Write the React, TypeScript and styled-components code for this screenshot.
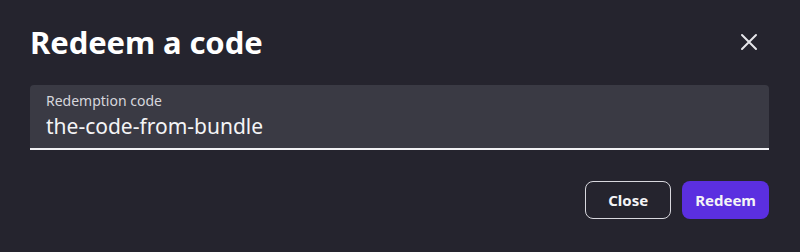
import styled, { createGlobalStyle } from "styled-components";

const GlobalStyle = createGlobalStyle`
  html, body {
    margin: 0;
    padding: 0;
    background: #25242e;
  }
  body {
    font-family: "Noto Sans", "Open Sans", sans-serif;
    color: #ffffff;
  }
`;

const Dialog = styled.div`
  width: 800px;
  height: 252px;
  box-sizing: border-box;
  padding: 22px 31px 0 30px;
  background: #25242e;
  display: flex;
  flex-direction: column;
`;

const Header = styled.div`
  display: flex;
  align-items: center;
  justify-content: space-between;
  height: 40px;
`;

const Title = styled.h2`
  margin: 0;
  font-size: 31px;
  font-weight: 700;
  letter-spacing: -0.1px;
  color: #ffffff;
`;

const IconButton = styled.button`
  width: 32px;
  height: 32px;
  margin-right: 4px;
  border: none;
  background: transparent;
  color: #e6e6ea;
  display: flex;
  align-items: center;
  justify-content: center;
  padding: 0;
  cursor: pointer;
`;

const Field = styled.label`
  margin-top: 23px;
  display: flex;
  flex-direction: column;
  background: #3a3a44;
  border-radius: 4px 4px 0 0;
  border-bottom: 2px solid #f2f2f5;
  padding: 7px 16px 6px;
  height: 50px;
`;

const FieldLabel = styled.span`
  font-size: 14px;
  line-height: 18px;
  color: #d6d6dc;
`;

const FieldInput = styled.input`
  border: none;
  outline: none;
  background: transparent;
  padding: 0;
  margin-top: 3px;
  font-family: inherit;
  font-size: 21px;
  line-height: 26px;
  color: #f4f4f6;
`;

const Actions = styled.div`
  margin-top: 31px;
  display: flex;
  justify-content: flex-end;
  gap: 11px;
`;

const Button = styled.button<{ $primary?: boolean }>`
  height: 38px;
  box-sizing: border-box;
  padding: 0 ${(p) => (p.$primary ? "13px" : "22px")};
  border-radius: 8px;
  font-family: inherit;
  font-size: 15px;
  font-weight: 700;
  color: #f4f4f6;
  cursor: pointer;
  border: ${(p) => (p.$primary ? "none" : "1.5px solid #d8d8de")};
  background: ${(p) => (p.$primary ? "#5b2fe0" : "transparent")};
`;

export default function App() {
  return (
    <>
      <GlobalStyle />
      <Dialog>
        <Header>
          <Title>Redeem a code</Title>
          <IconButton aria-label="Close">
            <svg width="18" height="18" viewBox="0 0 18 18">
              <path
                d="M2 2 L16 16 M16 2 L2 16"
                stroke="currentColor"
                strokeWidth="2"
                strokeLinecap="round"
              />
            </svg>
          </IconButton>
        </Header>
        <Field>
          <FieldLabel>Redemption code</FieldLabel>
          <FieldInput defaultValue="the-code-from-bundle" />
        </Field>
        <Actions>
          <Button>Close</Button>
          <Button $primary>Redeem</Button>
        </Actions>
      </Dialog>
    </>
  );
}
